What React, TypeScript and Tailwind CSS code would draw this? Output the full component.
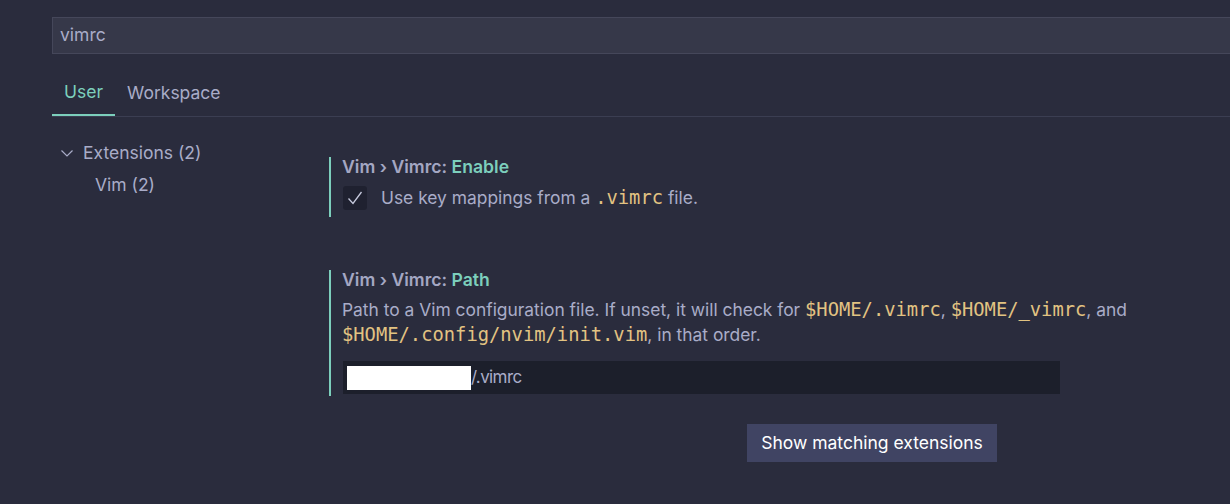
import React from 'react';

const mono = "font-['DejaVu_Sans_Mono',monospace] text-[#e2c382] text-[18.8px] leading-[20px]";

function Chevron() {
  return (
    <svg width="14" height="14" viewBox="0 0 14 14" className="text-[#a9acc8]">
      <polyline points="1.5,4.5 7,10 12.5,4.5" fill="none" stroke="currentColor" strokeWidth="1.2" />
    </svg>
  );
}

function Check() {
  return (
    <div className="w-[24px] h-[24px] rounded-[3px] bg-[#1f2130] flex items-center justify-center">
      <svg width="18" height="18" viewBox="0 0 18 18">
        <polyline points="2.5,9.5 7,14.5 15.5,3" fill="none" stroke="#c7cade" strokeWidth="1.3" />
      </svg>
    </div>
  );
}

function SettingTitle({ name }: { name: string }) {
  return (
    <div className="h-[20px] flex items-center text-[17.6px] font-semibold text-[#a4a7c3]">
      Vim › Vimrc:&nbsp;<span className="text-[#7ccfbc]">{name}</span>
    </div>
  );
}

export default function App() {
  return (
    <div className="w-[1230px] h-[504px] overflow-hidden bg-[#2a2c3d] pt-[17px] pl-[52px] font-['Inter',sans-serif] text-[#a9acc8]">
      <div className="h-[37px] border border-r-0 border-[#45475a] bg-[#363849] flex items-center pl-[7px] text-[17.5px] text-[#a9acc8]">
        vimrc
      </div>

      <div className="mt-[14px] flex border-b border-[#3b3e52]">
        <div className="h-[48px] pt-[2px] px-[12px] flex items-center text-[17.5px] text-[#7ccfbc] border-b-2 border-[#7ccfbc] -mb-px">
          User
        </div>
        <div className="h-[48px] pt-[2px] px-[12px] flex items-center text-[17.5px] text-[#a9acc8]">
          Workspace
        </div>
      </div>

      <div className="flex pt-[20px]">
        <div className="w-[277px] pl-[8px] text-[17.5px]">
          <div className="h-[32px] flex items-center gap-[9px]">
            <Chevron />
            <span>Extensions (2)</span>
          </div>
          <div className="h-[32px] flex items-center pl-[35px]">Vim (2)</div>
        </div>

        <div className="flex-1 pt-[20px]">
          <div className="border-l-2 border-[#7ccfbc] pl-[11px] pb-[6px]">
            <SettingTitle name="Enable" />
            <div className="mt-[8px] flex items-center gap-[14px] text-[17.4px]">
              <div className="ml-[1px]"><Check /></div>
              <span>
                Use key mappings from a <span className={mono}>.vimrc</span> file.
              </span>
            </div>
          </div>

          <div className="mt-[53px] border-l-2 border-[#7ccfbc] pl-[11px] pb-[2px]">
            <SettingTitle name="Path" />
            <div className="mt-[7px] text-[17.4px] leading-[25px] w-[840px]">
              Path to a Vim configuration file. If unset, it will check for{' '}
              <span className={mono}>$HOME/.vimrc</span>, <span className={mono}>$HOME/_vimrc</span>, and{' '}
              <span className={mono}>$HOME/.config/nvim/init.vim</span>, in that order.
            </div>
            <div className="mt-[14px] ml-[1px] w-[717px] h-[33px] bg-[#1c1f2b] flex items-center pl-[4px] text-[17px] tracking-[-0.6px]">
              <div className="w-[124px] h-[24px] bg-white" />
              <span>/.vimrc</span>
            </div>
          </div>

          <div className="mt-[28px] ml-[418px] w-[250px] h-[38px] bg-[#404463] flex items-center justify-center text-[17.5px] text-white">
            Show matching extensions
          </div>
        </div>
      </div>
    </div>
  );
}
